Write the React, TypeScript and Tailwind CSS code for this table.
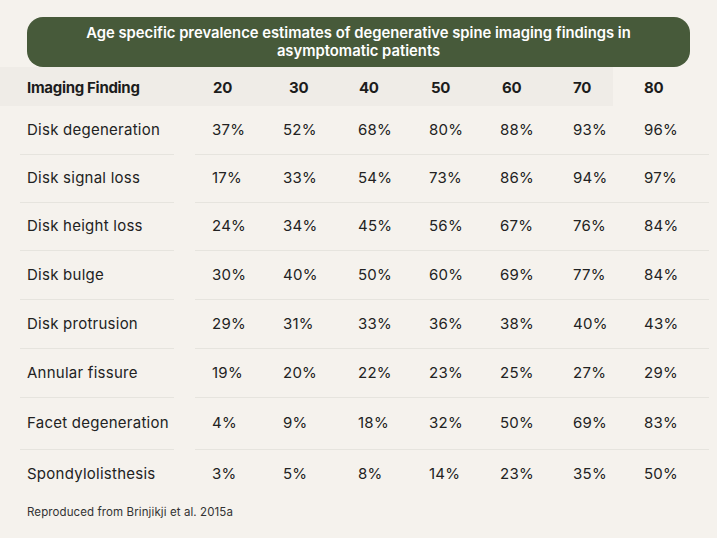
const ages = ["20", "30", "40", "50", "60", "70", "80"];

const rows: { label: string; values: string[]; h: string }[] = [
    { label: "Disk degeneration", values: ["37%", "52%", "68%", "80%", "88%", "93%", "96%"], h: "h-[49px]" },
    { label: "Disk signal loss", values: ["17%", "33%", "54%", "73%", "86%", "94%", "97%"], h: "h-[48px]" },
    { label: "Disk height loss", values: ["24%", "34%", "45%", "56%", "67%", "76%", "84%"], h: "h-[48px]" },
    { label: "Disk bulge", values: ["30%", "40%", "50%", "60%", "69%", "77%", "84%"], h: "h-[49px]" },
    { label: "Disk protrusion", values: ["29%", "31%", "33%", "36%", "38%", "40%", "43%"], h: "h-[49px]" },
    { label: "Annular fissure", values: ["19%", "20%", "22%", "23%", "25%", "27%", "29%"], h: "h-[49px]" },
    { label: "Facet degeneration", values: ["4%", "9%", "18%", "32%", "50%", "69%", "83%"], h: "h-[52px]" },
    { label: "Spondylolisthesis", values: ["3%", "5%", "8%", "14%", "23%", "35%", "50%"], h: "h-[49px]" },
];

// widths of the value columns, first value column starts at x=213
const colW = ["w-[71px]", "w-[75px]", "w-[71px]", "w-[71px]", "w-[73px]", "w-[71px]", "w-[64px]"];
const headW = ["w-[76px]", "w-[70px]", "w-[72px]", "w-[71px]", "w-[71px]", "w-[71px]", "w-[64px]"];

export default function App() {
    return (
        <div
            className="w-[717px] h-[538px] bg-[#f5f2ed] text-[#222222] overflow-hidden"
            style={{ fontFamily: "Inter, 'Noto Sans', sans-serif" }}
        >
            {/* Title */}
            <div className="pt-[17px] px-[27px]">
                <div className="h-[50px] rounded-[16px] bg-[#475a3a] flex items-center justify-center text-center text-white text-[14.8px] font-semibold leading-[18px] px-6">
                    Age specific prevalence estimates of degenerative spine imaging findings in
                    <br />
                    asymptomatic patients
                </div>
            </div>

            {/* Header band */}
            <div className="w-[613px] h-[39px] pt-[4px] bg-[#efece7] flex items-center font-bold text-[15px] tracking-[-0.3px] text-[#1c1c1c]">
                <div className="w-[213px] shrink-0 pl-[27px]">Imaging Finding</div>
                {ages.map((a, i) => (
                    <div key={a} className={`${headW[i]} shrink-0`}>
                        {a}
                    </div>
                ))}
            </div>

            {/* Rows */}
            {rows.map((r, idx) => {
                const last = idx === rows.length - 1;
                const border = last ? "" : "border-b border-[#e6e4de]";
                return (
                    <div key={r.label} className={`flex ${r.h} text-[15px] tracking-[0.25px]`}>
                        <div className={`ml-[20px] w-[154px] shrink-0 pl-[7px] flex items-center ${border}`}>{r.label}</div>
                        <div className={`ml-[21px] w-[514px] shrink-0 pl-[17px] flex items-center ${border}`}>
                            {r.values.map((v, i) => (
                                <div key={i} className={`${colW[i]} shrink-0`}>
                                    {v}
                                </div>
                            ))}
                        </div>
                    </div>
                );
            })}

            {/* Footer */}
            <div className="pl-[27px] pt-[5px] text-[11.5px] tracking-[0.1px] text-[#333333]">
                Reproduced from Brinjikji et al. 2015a
            </div>
        </div>
    );
}
